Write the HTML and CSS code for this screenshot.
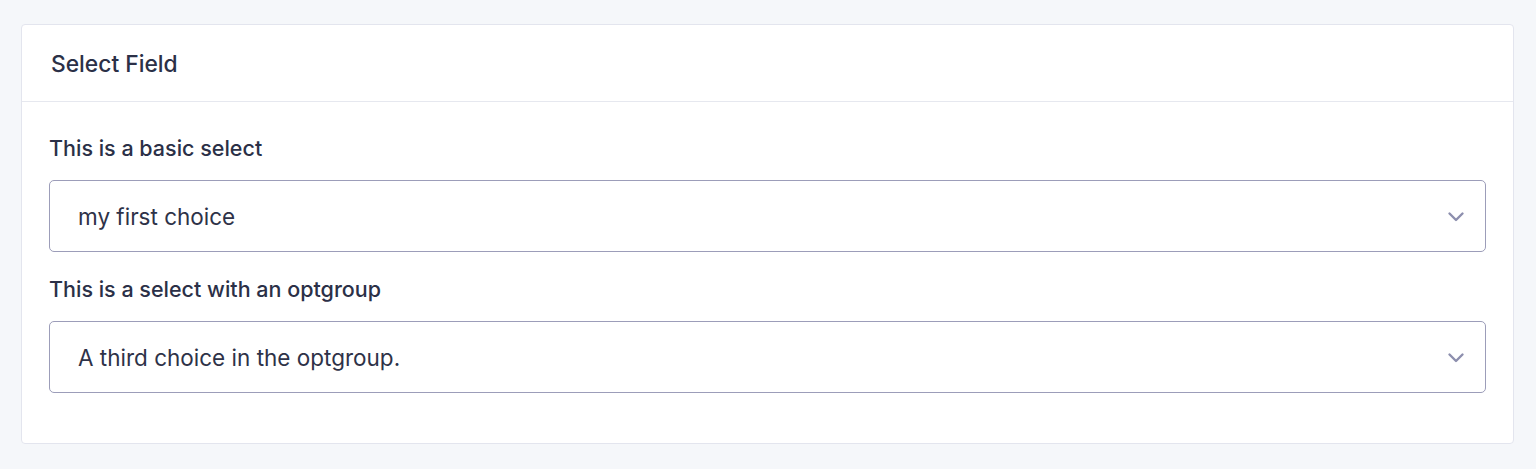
FILE: index.html
```html
<!DOCTYPE html>
<html>
<head>
<meta charset="utf-8">
<link rel="stylesheet" href="styles.css">
</head>
<body>
<div class="card">
  <div class="card-header">Select Field</div>
  <div class="card-body">
    <div class="field">
      <label class="label">This is a basic select</label>
      <div class="select">
        <span class="value">my first choice</span>
        <svg class="chev" width="18" height="11" viewBox="0 0 18 11"><path d="M2.5 2.5l6.5 6.5 6.5-6.5" fill="none" stroke="#8d8fae" stroke-width="2.4" stroke-linecap="round" stroke-linejoin="round"/></svg>
      </div>
    </div>
    <div class="field">
      <label class="label">This is a select with an optgroup</label>
      <div class="select">
        <span class="value">A third choice in the optgroup.</span>
        <svg class="chev" width="18" height="11" viewBox="0 0 18 11"><path d="M2.5 2.5l6.5 6.5 6.5-6.5" fill="none" stroke="#8d8fae" stroke-width="2.4" stroke-linecap="round" stroke-linejoin="round"/></svg>
      </div>
    </div>
  </div>
</div>
</body>
</html>
```
FILE: styles.css
```css
html, body {
  margin: 0;
  padding: 0;
  background: #f5f7fa;
  font-family: Inter, "Noto Sans", sans-serif;
  color: #2b3047;
}
body {
  padding: 24px 22px 0 21px;
}
.card {
  background: #fff;
  border: 1px solid #e3e5ee;
  border-radius: 4px;
  height: 420px;
  box-sizing: border-box;
}
.card-header {
  height: 77px;
  box-sizing: border-box;
  border-bottom: 1px solid #e6e8ef;
  padding: 0 29px;
  display: flex;
  align-items: center;
  font-size: 22.8px;
  font-weight: 500;
}
.card-body {
  padding: 33px 27px 0 27px;
  display: flex;
  flex-direction: column;
  gap: 24px;
}
.field {
  display: flex;
  flex-direction: column;
  gap: 19px;
}
.label {
  font-size: 21.5px;
  font-weight: 500;
  line-height: 26px;
}
.select {
  height: 72px;
  box-sizing: border-box;
  border: 1.5px solid #9c9db9;
  border-radius: 5px;
  display: flex;
  align-items: center;
  justify-content: space-between;
  padding: 0 20px 0 28px;
}
.value {
  font-size: 22.5px;
  color: #2e3248;
}
```
